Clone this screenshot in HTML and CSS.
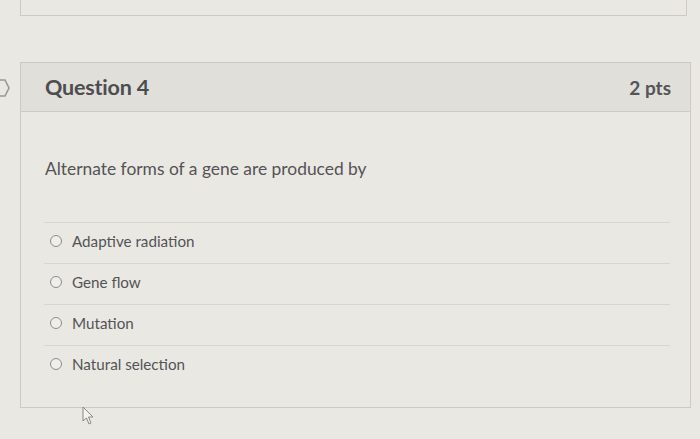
FILE: index.html
```html
<!DOCTYPE html>
<html>
<head>
<meta charset="utf-8">
<link rel="stylesheet" href="styles.css">
</head>
<body>
<div class="page">
  <div class="prev-card"></div>
  <div class="question-row">
    <svg class="chevron" width="12" height="20" viewBox="0 0 12 20"><path d="M0 2 L6 2 L10 10 L6 18 L0 18" fill="none" stroke="#9a9894" stroke-width="1.6"/></svg>
    <div class="card">
      <div class="card-header">
        <span class="title">Question 4</span>
        <span class="pts">2 pts</span>
      </div>
      <div class="card-body">
        <p class="question">Alternate forms of a gene are produced by</p>
        <ul class="answers">
          <li class="answer"><span class="radio"></span>Adaptive radiation</li>
          <li class="answer"><span class="radio"></span>Gene flow</li>
          <li class="answer"><span class="radio"></span>Mutation</li>
          <li class="answer"><span class="radio"></span>Natural selection</li>
        </ul>
      </div>
    </div>
    <svg class="cursor" width="14" height="20" viewBox="0 0 14 20"><path d="M1 1 L1 15 L4.5 12 L7 18 L9 17 L6.5 11 L11 11 Z" fill="#f4f3f0" stroke="#8a8884" stroke-width="1"/></svg>
  </div>
</div>
</body>
</html>
```
FILE: styles.css
```css
html, body {
  margin: 0;
  padding: 0;
}
body {
  background: #eae8e3;
  font-family: Lato, "Open Sans", sans-serif;
  color: #555;
  width: 700px;
  height: 439px;
  overflow: hidden;
}
.page {
  padding: 0 10px 0 20px;
}
.prev-card {
  height: 16px;
  width: 667px;
  border: 1px solid #cdcac4;
  border-top: none;
  box-sizing: border-box;
}
.question-row {
  position: relative;
  margin-top: 46px;
}
.chevron {
  position: absolute;
  left: -21px;
  top: 16px;
}
.cursor {
  position: absolute;
  left: 62px;
  top: 344px;
}
.card {
  width: 671px;
  box-sizing: border-box;
  border: 1px solid #cdcac4;
  height: 346px;
}
.card-header {
  background: #e1dfda;
  border-bottom: 1px solid #cdcac4;
  height: 48px;
  display: flex;
  align-items: center;
  justify-content: space-between;
  padding: 0 19px 0 24px;
}
.title {
  font-size: 21.5px;
  font-weight: 700;
  color: #4d4c4f;
  letter-spacing: -0.2px;
}
.pts {
  font-size: 19px;
  font-weight: 700;
  color: #555458;
}
.card-body {
  padding: 0 20px 0 23px;
}
.question {
  margin: 45px 0 0 1px;
  font-size: 17.4px;
  line-height: 24px;
  color: #545356;
}
.answers {
  list-style: none;
  margin: 41px 0 0;
  padding: 0;
}
.answer {
  border-top: 1px solid #d8d6d1;
  height: 36px;
  padding-bottom: 4px;
  display: flex;
  align-items: center;
  font-size: 15.2px;
  color: #545356;
}
.radio {
  width: 10px;
  height: 10px;
  border: 1.5px solid #8f8d8a;
  border-radius: 50%;
  margin: 0 10px 0 6px;
  background: #efeeea;
}
```
